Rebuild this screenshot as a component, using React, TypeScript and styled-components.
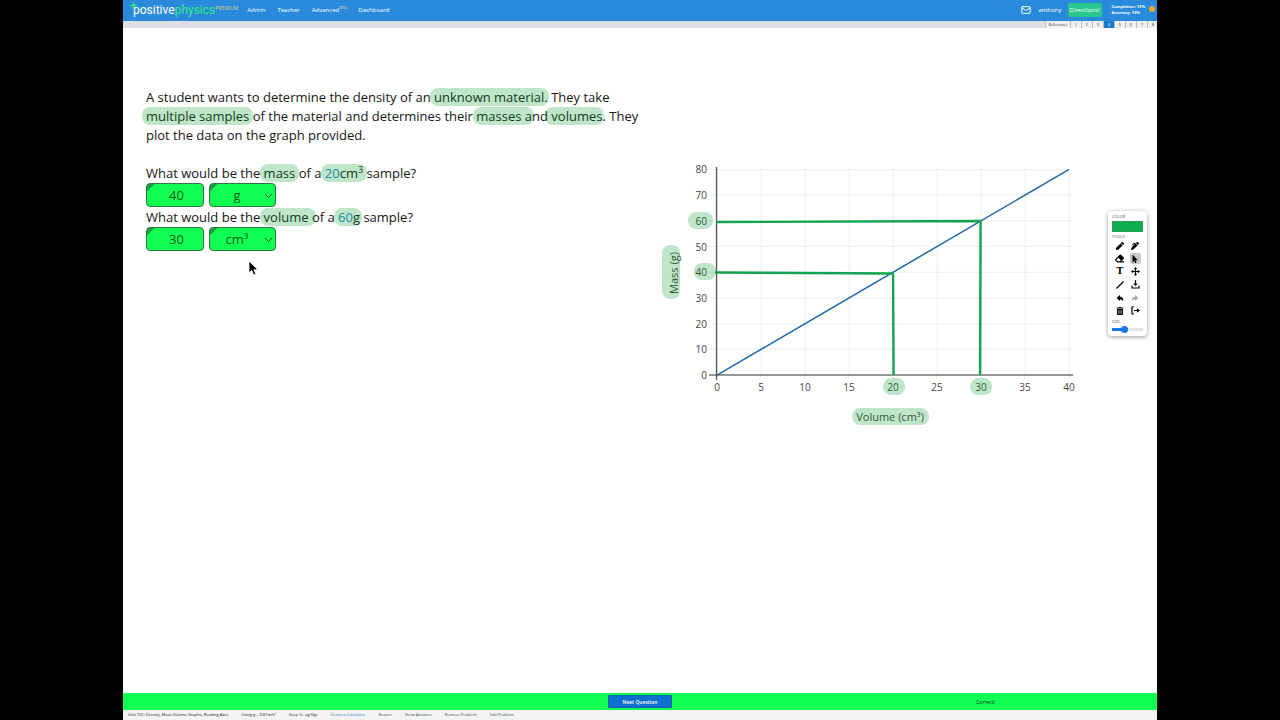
import React from "react";
import styled, { createGlobalStyle } from "styled-components";
import { FaEraser, FaMousePointer, FaPen, FaPenAlt, FaTrashAlt } from "react-icons/fa";
import { IoArrowRedo, IoArrowUndo } from "react-icons/io5";
import { Mail } from "lucide-react";

const Global = createGlobalStyle`
  * { box-sizing: border-box; }
  body { margin: 0; background: #000; font-family: "Open Sans", "Noto Sans", sans-serif; color: #161616; }
  button, input, select { font-family: inherit; }
`;

const Letterbox = styled.div`
  min-height: 100vh;
  padding: 0 123px;
  background: #000;
  display: flex;
`;

const Page = styled.div`
  position: relative;
  flex: 1;
  min-width: 0;
  display: flex;
  flex-direction: column;
  background: #fff;
  overflow: hidden;
`;

const Header = styled.header`
  height: 21px;
  padding: 0 2px 1px 7px;
  display: flex;
  align-items: center;
  background: #298adb;
  color: #fff;
  font-size: 6px;
  line-height: 8px;
  font-weight: 500;
`;

const Logo = styled.a`
  position: relative;
  padding-left: 3px;
  color: #fff;
  text-decoration: none;
  font-family: Roboto, sans-serif;
  font-size: 12px;
  line-height: 20px;
  font-weight: 400;
  span { color: #35ea86; }
  svg { position: absolute; left: 0; top: 2px; }
`;

const Premium = styled.span`
  align-self: flex-start;
  margin: 4px 9px 0 0;
  color: #d9cf7c;
  font-size: 5px;
  line-height: 8px;
`;

const Nav = styled.nav`
  flex: 1;
  display: flex;
  gap: 12px;
`;

const NavLink = styled.a`
  color: #fff;
  text-decoration: none;
  white-space: nowrap;
  sup { font-size: 3px; line-height: 1px; color: #e3dc9a; }
`;

const Account = styled.div`
  display: flex;
  align-items: center;
  gap: 6px;
`;

const MailIcon = styled(Mail)`
  margin-right: 1px;
`;

const Directions = styled.button`
  height: 14px;
  padding: 0 2px;
  border: 0;
  border-radius: 2px;
  background: #27c78d;
  color: #fff;
  font-size: 6px;
  line-height: 8px;
  font-weight: 500;
`;

const Score = styled.div`
  margin: 0 -2px 0 4px;
  font-size: 4px;
  line-height: 6px;
  font-weight: 700;
`;

const StatusDot = styled.span`
  align-self: flex-start;
  width: 6px;
  height: 6px;
  margin-top: 3px;
  border-radius: 50%;
  background: #f0a52c;
`;

const TabStrip = styled.nav`
  height: 7px;
  margin-right: -1px;
  display: flex;
  justify-content: flex-end;
  background: #dcdfe3;
`;

const Tab = styled.a<{ $active?: boolean; $wide?: boolean }>`
  width: ${(p) => (p.$wide ? 25 : 11)}px;
  border-left: 1px solid #b9bcc0;
  background: ${(p) => (p.$active ? "#1b7bd0" : "#efefef")};
  color: ${(p) => (p.$active ? "#fff" : "#333")};
  font-size: 4px;
  line-height: 7px;
  text-align: center;
  text-decoration: none;
`;

const Main = styled.main`
  flex: 1;
  display: grid;
  grid-template-columns: 51fr 49fr;
  align-items: start;
  padding: 60px 23px 0;
`;

const Problem = styled.section`
  font-size: 13px;
  line-height: 19px;
`;

const Prompt = styled.p`
  margin: 0 0 19px;
`;

const Mark = styled.mark<{ $left?: number; $right?: number }>`
  position: relative;
  background: none;
  color: inherit;
  white-space: nowrap;
  &::after {
    content: "";
    position: absolute;
    top: 0;
    bottom: 0;
    left: -${(p) => p.$left ?? 4}px;
    right: -${(p) => p.$right ?? 4}px;
    border-radius: 8px;
    background: rgba(4, 154, 40, 0.25);
  }
  sup { font-size: 9px; line-height: 1px; }
`;

const Value = styled.span`
  color: #2a86cc;
`;

const Question = styled.label`
  display: block;
`;

const Answer = styled.div`
  display: flex;
  gap: 5px;
  height: 25px;
`;

const Field = styled.div<{ $width: number }>`
  position: relative;
  width: ${(p) => p.$width}px;
  height: 24px;
  border: 1px solid #2c7a3f;
  border-radius: 4px;
  background: linear-gradient(135deg, #1f9d45 5px, #10ff52 5px);
  overflow: hidden;
  color: #155c24;
  input, select {
    display: block;
    width: 100%;
    height: 100%;
    border: 0;
    outline: 0;
    background: none;
    color: inherit;
    font-size: 13px;
    text-align: center;
  }
  input { padding: 0 0 0 3px; }
  select { appearance: none; padding: 0 11px 0 0; text-align-last: center; }
  svg { position: absolute; right: 2px; top: 9px; pointer-events: none; }
`;

const Graph = styled.svg`
  display: block;
  width: 100%;
  margin-top: 67px;
  font-family: "Open Sans", sans-serif;
  font-size: 10px;
  fill: #444;
`;

const Pointer = styled.svg`
  position: absolute;
  left: 125px;
  top: 260px;
`;

const Palette = styled.aside`
  position: absolute;
  top: 211px;
  right: 10px;
  width: 39px;
  padding: 3px 4px 3px;
  border-radius: 4px;
  background: #fff;
  box-shadow: 0 1px 4px rgba(0, 0, 0, 0.4);
`;

const PaletteLabel = styled.div`
  display: block;
  color: #555;
  font-size: 4px;
  line-height: 5px;
`;

const Swatch = styled.button`
  display: block;
  width: 100%;
  height: 11px;
  margin: 2px 0;
  padding: 0;
  border: 1px solid #2f9e5c;
  background: #0bac4d;
`;

const Tools = styled.div`
  display: grid;
  grid-template-columns: 1fr 1fr;
  justify-items: center;
  row-gap: 2px;
  margin: 1px 0 3px;
`;

const Tool = styled.button<{ $active?: boolean; $faded?: boolean }>`
  width: 11px;
  height: 11px;
  padding: 0;
  display: flex;
  align-items: center;
  justify-content: center;
  border: 0;
  border-radius: 2px;
  background: ${(p) => (p.$active ? "#c9c9c9" : "none")};
  color: ${(p) => (p.$faded ? "#aaa" : "#000")};
  font: 700 9px/11px "DejaVu Serif", serif;
`;

const SizeSlider = styled.input`
  appearance: none;
  display: block;
  width: 100%;
  height: 8px;
  margin: 1px 0 0;
  background: linear-gradient(90deg, #1a78e6 38%, #e4e4e4 38%) center / 100% 3px no-repeat;
  &::-webkit-slider-thumb {
    appearance: none;
    width: 7px;
    height: 7px;
    border-radius: 50%;
    background: #1a78e6;
  }
`;

const ResultBar = styled.div`
  height: 17px;
  display: grid;
  grid-template-columns: 1fr 64px 1fr;
  align-items: center;
  background: #10ff52;
  font-size: 5px;
`;

const NextButton = styled.button`
  grid-column: 2;
  height: 13px;
  padding: 0;
  border: 1px solid #1263b4;
  border-radius: 1px;
  background: #0f6fd0;
  color: #fff;
  font-size: 5px;
  font-weight: 600;
`;

const Result = styled.output`
  justify-self: center;
  padding-left: 142px;
`;

const Footer = styled.footer`
  height: 10px;
  display: flex;
  align-items: center;
  gap: 13px;
  padding: 0 5px;
  background: #f3f3f3;
  font-size: 4px;
  line-height: 8px;
  white-space: nowrap;
`;

const FooterLink = styled.a<{ $blue?: boolean }>`
  color: ${(p) => (p.$blue ? "#2a80c4" : "#2c5c36")};
  text-decoration: none;
`;

const X0 = 67;
const Y0 = 220;
const xs = [0, 5, 10, 15, 20, 25, 30, 35, 40];
const ys = [0, 10, 20, 30, 40, 50, 60, 70, 80];
const px = (v: number) => X0 + v * 8.8;
const py = (v: number) => Y0 - v * 2.57;

function Highlight({ x, y, w, h }: { x: number; y: number; w: number; h: number }) {
  return <rect x={x} y={y} width={w} height={h} rx={8} fill="rgba(4,154,40,0.25)" />;
}

function MassVolumeGraph() {
  return (
    <Graph viewBox="0 0 484 280" role="img" aria-label="Mass against volume">
      <g stroke="#eeeeee" strokeWidth="1">
        {xs.map((v) => <path key={v} d={`M${px(v)} 13V224`} />)}
        {ys.map((v) => <path key={v} d={`M${X0 - 7} ${py(v)}H422`} />)}
      </g>
      <path d={`M${X0 - 8} ${Y0}H423`} stroke="#777" strokeWidth="1.5" />
      <path d={`M${X0 - 0.5} 12V225`} stroke="#555" strokeWidth="1.3" />
      <path d={`M${X0} ${Y0}L${px(40)} ${py(80)}`} stroke="#1f68a4" strokeWidth="1.5" />
      {xs.map((v) => <text key={v} x={px(v)} y="236" textAnchor="middle">{v}</text>)}
      {ys.map((v) => <text key={v} x="57" y={py(v) + 4} textAnchor="end">{v}</text>)}
      <text x="240" y="266" textAnchor="middle" fontSize="11">Volume (cm³)</text>
      <text transform="translate(28 118) rotate(-90)" textAnchor="middle" fontSize="11">Mass (g)</text>
      <g stroke="#12a350" strokeWidth="2.4" fill="none" strokeLinecap="round" strokeLinejoin="round">
        <path d="M67 67L330.500 66L330 219" />
        <path d="M66 117.500L243 118.500L243.500 219" />
      </g>
      <Highlight x={38} y={57} w={25} h={17} />
      <Highlight x={44} y={108} w={22} h={17} />
      <Highlight x={233} y={223} w={22} h={17} />
      <Highlight x={320} y={223} w={22} h={17} />
      <Highlight x={202} y={253} w={77} h={17} />
      <Highlight x={12} y={90} w={18} h={54} />
    </Graph>
  );
}

function Chevron() {
  return (
    <svg width="9" height="6" viewBox="0 0 9 6" fill="none" stroke="#155c24" strokeWidth="1">
      <path d="M1 1l3.500 3.500L8 1" />
    </svg>
  );
}

export default function App() {
  return (
    <Letterbox>
      <Global />
      <Page>
        <Header>
          <Logo href="#">
            <svg width="7" height="7" viewBox="0 0 7 7" stroke="#35ea86" strokeWidth="1.6">
              <path d="M3.500 0.500V6.500M0.500 3.500H6.500" />
            </svg>
            positive<span>physics</span>
          </Logo>
          <Premium>PREMIUM</Premium>
          <Nav>
            <NavLink href="#">Admin</NavLink>
            <NavLink href="#">Teacher</NavLink>
            <NavLink href="#">Advanced<sup>BETA</sup></NavLink>
            <NavLink href="#">Dashboard</NavLink>
          </Nav>
          <Account>
            <MailIcon size={10} strokeWidth={2.4} />
            <span>anthony</span>
            <Directions>Directions!</Directions>
            <Score>
              <div>Completion: 13%</div>
              <div>Accuracy: 13%</div>
            </Score>
            <StatusDot />
          </Account>
        </Header>
        <TabStrip>
          <Tab href="#" $wide>Reference</Tab>
          {[1, 2, 3, 4, 5, 6, 7, 8].map((n) => (
            <Tab key={n} href="#" $active={n === 4}>{n}</Tab>
          ))}
        </TabStrip>

        <Main>
          <Problem>
            <Prompt>
              A student wants to determine the density of an <Mark $right={1}>unknown material.</Mark> They take{" "}
              <Mark>multiple samples</Mark> of the material and determines their{" "}
              <Mark $left={3} $right={13}>masses</Mark> and <Mark $left={6} $right={2}>volumes</Mark>. They plot the
              data on the graph provided.
            </Prompt>
            <Question htmlFor="mass">
              What would be the <Mark>mass</Mark> of a <Mark><Value>20</Value>cm<sup>3</sup></Mark> sample?
            </Question>
            <Answer>
              <Field $width={58}><input id="mass" defaultValue="40" /></Field>
              <Field $width={67}>
                <select aria-label="Mass unit" defaultValue="g"><option>g</option><option>kg</option></select>
                <Chevron />
              </Field>
            </Answer>
            <Question htmlFor="volume">
              What would be the <Mark $right={7}>volume</Mark> of a <Mark $right={2}><Value>60</Value>g</Mark> sample?
            </Question>
            <Answer>
              <Field $width={58}><input id="volume" defaultValue="30" /></Field>
              <Field $width={67}>
                <select aria-label="Volume unit" defaultValue="cm³"><option>cm³</option><option>m³</option></select>
                <Chevron />
              </Field>
            </Answer>
          </Problem>
          <MassVolumeGraph />
        </Main>

        <Pointer width="11" height="16" viewBox="0 0 11 16">
          <path d="M1 1V13L3.800 10.400L5.700 15L7.800 14.100L5.900 9.700H9.800Z" fill="#000" stroke="#fff" strokeWidth="0.8" />
        </Pointer>

        <Palette>
          <PaletteLabel>COLOR</PaletteLabel>
          <Swatch aria-label="Color" />
          <PaletteLabel>TOOLS</PaletteLabel>
          <Tools>
            <Tool aria-label="Pen"><FaPen size={8} /></Tool>
            <Tool aria-label="Highlighter"><FaPenAlt size={8} /></Tool>
            <Tool aria-label="Eraser"><FaEraser size={9} /></Tool>
            <Tool aria-label="Pointer" $active><FaMousePointer size={8} /></Tool>
            <Tool aria-label="Text">T</Tool>
            <Tool aria-label="Move">
              <svg width="9" height="9" viewBox="0 0 18 18" stroke="currentColor" strokeWidth="2" fill="currentColor">
                <path d="M9 2V16M2 9H16" />
                <path stroke="none" d="M9 0l3.500 4.500h-7zM9 18l3.500-4.500h-7zM0 9l4.500-3.500v7zM18 9l-4.500-3.500v7z" />
              </svg>
            </Tool>
            <Tool aria-label="Line">
              <svg width="8" height="8" viewBox="0 0 8 8" stroke="currentColor" strokeWidth="1.3"><path d="M0.500 7.500L7.500 0.500" /></svg>
            </Tool>
            <Tool aria-label="Save">
              <svg width="9" height="9" viewBox="0 0 18 18" stroke="currentColor" strokeWidth="2.4" fill="none">
                <path d="M2 11V16H16V11M9 0V8" /><path stroke="none" fill="currentColor" d="M4.500 7h9L9 12.500z" />
              </svg>
            </Tool>
            <Tool aria-label="Undo"><IoArrowUndo size={8} /></Tool>
            <Tool aria-label="Redo" $faded><IoArrowRedo size={8} /></Tool>
            <Tool aria-label="Delete"><FaTrashAlt size={8} /></Tool>
            <Tool aria-label="Exit">
              <svg width="9" height="9" viewBox="0 0 18 18" stroke="currentColor" strokeWidth="2.4" fill="none">
                <path d="M6 2H2V16H6M6 9H13" /><path stroke="none" fill="currentColor" d="M12 4.500v9L18 9z" />
              </svg>
            </Tool>
          </Tools>
          <PaletteLabel as="label" htmlFor="size">SIZE</PaletteLabel>
          <SizeSlider id="size" type="range" min={0} max={100} defaultValue={37} />
        </Palette>

        <ResultBar>
          <NextButton>Next Question</NextButton>
          <Result>Correct!</Result>
        </ResultBar>
        <Footer>
          <span>Unit 701: Density, Mass-Volume Graphs; Reading Axes</span>
          <span>Using g = 9.81m/s²</span>
          <span>Keep 3+ sig figs</span>
          <FooterLink href="#" $blue>Desmos Calculator</FooterLink>
          <FooterLink href="#">Restart</FooterLink>
          <FooterLink href="#">Show Answers</FooterLink>
          <FooterLink href="#">Remove Problem</FooterLink>
          <FooterLink href="#">Edit Problem</FooterLink>
        </Footer>
      </Page>
    </Letterbox>
  );
}
